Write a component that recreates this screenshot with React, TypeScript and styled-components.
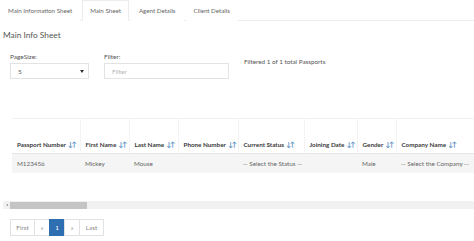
import React from "react";
import styled, { createGlobalStyle } from "styled-components";

const Global = createGlobalStyle`
  html, body { margin: 0; padding: 0; background: #fff; }
  body { font-family: Lato, "Open Sans", sans-serif; color: #555; font-size: 7px; }
  * { box-sizing: border-box; }
`;

const Page = styled.div`
  width: 474px;
  height: 241px;
  overflow: hidden;
`;

const Tabs = styled.div`
  display: flex;
  height: 21px;
  border-bottom: 1px solid #ececec;
`;

const Tab = styled.div<{ $active?: boolean }>`
  display: flex;
  align-items: center;
  padding: 0 7px;
  margin-right: 2px;
  margin-bottom: -1px;
  font-size: 6.2px;
  color: #666;
  border: 1px solid ${(p) => (p.$active ? "#ececec" : "transparent")};
  border-bottom-color: ${(p) => (p.$active ? "#fff" : "transparent")};
  background: #fff;
`;

const Heading = styled.h3`
  margin: 0;
  padding: 8px 3px 0;
  font-size: 8.3px;
  line-height: 12px;
  font-weight: 400;
  color: #555;
  height: 29px;
`;

const Controls = styled.div`
  display: flex;
  align-items: flex-start;
  padding-left: 10px;
`;

const Field = styled.div<{ $w: number; $mr: number }>`
  width: ${(p) => p.$w}px;
  margin-right: ${(p) => p.$mr}px;
  display: flex;
  flex-direction: column;
`;

const Label = styled.label`
  font-size: 6.5px;
  color: #555;
  height: 13px;
  line-height: 13px;
`;

const Box = styled.div<{ $placeholder?: boolean }>`
  height: 16px;
  border: 1px solid #e3e3e3;
  display: flex;
  align-items: center;
  justify-content: space-between;
  padding: 0 4px 0 7px;
  font-size: 6.5px;
  color: ${(p) => (p.$placeholder ? "#b5b5b5" : "#555")};
`;

const Caret = styled.span`
  width: 0;
  height: 0;
  border-left: 2px solid transparent;
  border-right: 2px solid transparent;
  border-top: 3px solid #333;
`;

const Summary = styled.div`
  padding-top: 8px;
  font-size: 6.3px;
  color: #555;
`;

const TableWrap = styled.div`
  margin-top: 39px;
  padding-left: 12px;
  overflow: hidden;
  height: 83px;
`;

const Table = styled.table`
  border-collapse: collapse;
  table-layout: fixed;
  width: 474px;
  font-size: 6.3px;
`;

const Th = styled.th<{ $w: number }>`
  width: ${(p) => p.$w}px;
  height: 35px;
  vertical-align: bottom;
  text-align: left;
  padding: 0 5px 5px;
  font-weight: 700;
  color: #3a3a3a;
  white-space: nowrap;
  overflow: hidden;
  border-top: 1px solid #f0f0f0;
  border-left: 1px solid #f3f3f3;
  border-bottom: 1px solid #e6e6e6;
  &:first-child { border-left: none; }
`;

const Sort = styled.span`
  color: #5b8fc4;
  margin-left: 2px;
  font-size: 7px;
  font-weight: 700;
  letter-spacing: -1.5px;
`;

const Tr = styled.tr`
  background: #f5f5f5;
`;

const Td = styled.td`
  height: 19px;
  padding: 0 5px;
  color: #666;
  white-space: nowrap;
`;

const Scrollbar = styled.div`
  margin: 0 0 0 3px;
  height: 8px;
  background: #f1f1f1;
  display: flex;
  align-items: center;
`;

const ScrollArrow = styled.span`
  width: 7px;
  display: flex;
  justify-content: center;
  &::before {
    content: "";
    border-top: 1.5px solid transparent;
    border-bottom: 1.5px solid transparent;
    border-right: 2px solid #888;
  }
`;

const Thumb = styled.div`
  width: 77px;
  height: 7px;
  background: #c4c4c4;
`;

const Pager = styled.div`
  display: flex;
  margin: 10px 0 0 10px;
`;

const PageBtn = styled.div<{ $w: number; $active?: boolean }>`
  width: ${(p) => p.$w}px;
  height: 17px;
  display: flex;
  align-items: center;
  justify-content: center;
  font-size: 6.3px;
  border: 1px solid #e2e2e2;
  margin-left: -1px;
  background: ${(p) => (p.$active ? "#2e6fb2" : "#fff")};
  color: ${(p) => (p.$active ? "#fff" : "#888")};
  border-color: ${(p) => (p.$active ? "#2e6fb2" : "#e2e2e2")};
  &:first-child { margin-left: 0; }
`;

const cols: [string, number][] = [
  ["Passport Number", 68],
  ["First Name", 49],
  ["Last Name", 49],
  ["Phone Number", 60],
  ["Current Status", 66],
  ["Joining Date", 53],
  ["Gender", 39],
  ["Company Name", 90],
];

const row = ["M123456", "Mickey", "Mouse", "", "-- Select the Status --", "", "Male", "-- Select the Company --"];

export default function App() {
  return (
    <Page>
      <Global />
      <Tabs>
        <Tab>Main Information Sheet</Tab>
        <Tab $active>Main Sheet</Tab>
        <Tab>Agent Details</Tab>
        <Tab>Client Details</Tab>
      </Tabs>
      <Heading>Main Info Sheet</Heading>
      <Controls>
        <Field $w={79} $mr={15}>
          <Label>PageSize:</Label>
          <Box>
            <span>5</span>
            <Caret />
          </Box>
        </Field>
        <Field $w={125} $mr={15}>
          <Label>Filter:</Label>
          <Box $placeholder>Filter</Box>
        </Field>
        <Summary>Filtered 1 of 1 total Passports</Summary>
      </Controls>
      <TableWrap>
        <Table>
          <thead>
            <tr>
              {cols.map(([c, w]) => (
                <Th key={c} $w={w}>
                  {c}
                  <Sort>↓↑</Sort>
                </Th>
              ))}
            </tr>
          </thead>
          <tbody>
            <Tr>
              {row.map((v, i) => (
                <Td key={i}>{v}</Td>
              ))}
            </Tr>
          </tbody>
        </Table>
      </TableWrap>
      <Scrollbar>
        <ScrollArrow />
        <Thumb />
      </Scrollbar>
      <Pager>
        <PageBtn $w={25}>First</PageBtn>
        <PageBtn $w={16}>«</PageBtn>
        <PageBtn $w={16} $active>1</PageBtn>
        <PageBtn $w={16}>»</PageBtn>
        <PageBtn $w={25}>Last</PageBtn>
      </Pager>
    </Page>
  );
}
